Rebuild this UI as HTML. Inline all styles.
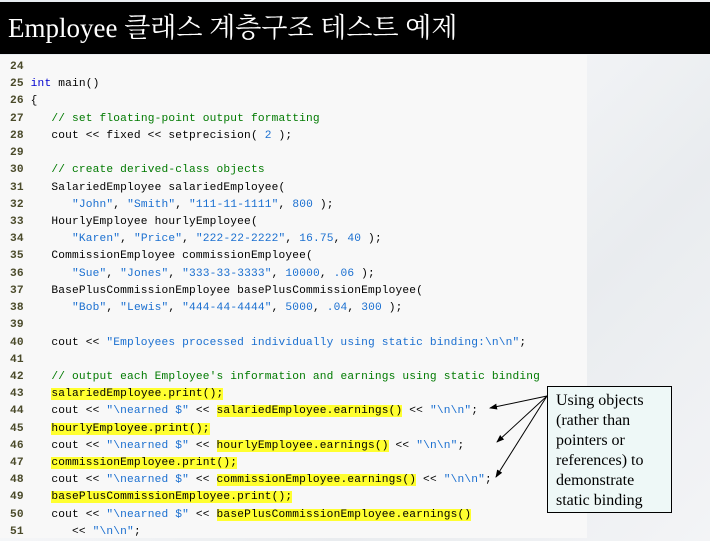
<!DOCTYPE html>
<html><head><meta charset="utf-8"><style>
*{margin:0;padding:0}
body{width:710px;height:541px;overflow:hidden;position:relative;background:linear-gradient(135deg,#e6ebf0 0%,#f6f7f9 40%,#e9ecef 70%,#f3f4f6 100%);font-family:"Liberation Sans",sans-serif}
#title{position:absolute;left:0;top:2px;width:710px;height:52px;background:#000;color:#fff;font:27px "Liberation Serif","Noto Serif CJK SC",serif;line-height:52px;padding-left:8px;box-sizing:border-box}
#code{position:absolute;left:0;top:55px;width:587px;height:483px;background:#f8f8f8}
pre{position:absolute;left:10px;top:59px;font:11.2px "Liberation Mono",monospace;letter-spacing:0.17px;line-height:17.22px;color:#000}
.n{color:#4a4a2a;font-weight:bold}
.k{color:#0000d0}.c{color:#007a00}.s{color:#1a6fd0}
.h{background:#ffff30}
#box{position:absolute;left:547px;top:386px;width:125px;height:127px;border:1.5px solid #000;background:#eef8f7;font:16px "Liberation Serif",serif;line-height:20px;padding:4px 0 0 8px;box-sizing:border-box;color:#000}
svg{position:absolute;left:0;top:0}
</style></head><body>
<div id="title">Employee 클래스 계층구조 테스트 예제</div>
<div id="code"></div>
<pre><span class="n">24</span>
<span class="n">25</span> <span class="k">int</span> main()
<span class="n">26</span> {
<span class="n">27</span>    <span class="c">// set floating-point output formatting</span>
<span class="n">28</span>    cout &lt;&lt; fixed &lt;&lt; setprecision( <span class="s">2</span> );
<span class="n">29</span>
<span class="n">30</span>    <span class="c">// create derived-class objects</span>
<span class="n">31</span>    SalariedEmployee salariedEmployee(
<span class="n">32</span>       <span class="s">"John"</span>, <span class="s">"Smith"</span>, <span class="s">"111-11-1111"</span>, <span class="s">800</span> );
<span class="n">33</span>    HourlyEmployee hourlyEmployee(
<span class="n">34</span>       <span class="s">"Karen"</span>, <span class="s">"Price"</span>, <span class="s">"222-22-2222"</span>, <span class="s">16.75</span>, <span class="s">40</span> );
<span class="n">35</span>    CommissionEmployee commissionEmployee(
<span class="n">36</span>       <span class="s">"Sue"</span>, <span class="s">"Jones"</span>, <span class="s">"333-33-3333"</span>, <span class="s">10000</span>, <span class="s">.06</span> );
<span class="n">37</span>    BasePlusCommissionEmployee basePlusCommissionEmployee(
<span class="n">38</span>       <span class="s">"Bob"</span>, <span class="s">"Lewis"</span>, <span class="s">"444-44-4444"</span>, <span class="s">5000</span>, <span class="s">.04</span>, <span class="s">300</span> );
<span class="n">39</span>
<span class="n">40</span>    cout &lt;&lt; <span class="s">"Employees processed individually using static binding:\n\n"</span>;
<span class="n">41</span>
<span class="n">42</span>    <span class="c">// output each Employee's information and earnings using static binding</span>
<span class="n">43</span>    <span class="h">salariedEmployee.print();</span>
<span class="n">44</span>    cout &lt;&lt; <span class="s">"\nearned $"</span> &lt;&lt; <span class="h">salariedEmployee.earnings()</span> &lt;&lt; <span class="s">"\n\n"</span>;
<span class="n">45</span>    <span class="h">hourlyEmployee.print();</span>
<span class="n">46</span>    cout &lt;&lt; <span class="s">"\nearned $"</span> &lt;&lt; <span class="h">hourlyEmployee.earnings()</span> &lt;&lt; <span class="s">"\n\n"</span>;
<span class="n">47</span>    <span class="h">commissionEmployee.print();</span>
<span class="n">48</span>    cout &lt;&lt; <span class="s">"\nearned $"</span> &lt;&lt; <span class="h">commissionEmployee.earnings()</span> &lt;&lt; <span class="s">"\n\n"</span>;
<span class="n">49</span>    <span class="h">basePlusCommissionEmployee.print();</span>
<span class="n">50</span>    cout &lt;&lt; <span class="s">"\nearned $"</span> &lt;&lt; <span class="h">basePlusCommissionEmployee.earnings()</span>
<span class="n">51</span>       &lt;&lt; <span class="s">"\n\n"</span>;</pre>
<div id="box">Using objects<br>(rather than<br>pointers or<br>references) to<br>demonstrate<br>static binding</div>
<svg width="710" height="541"><defs><marker id="a" markerWidth="8" markerHeight="6" refX="7" refY="3" orient="auto"><path d="M0,0 L8,3 L0,6 Z" fill="#000"/></marker></defs>
<g stroke="#000" stroke-width="1" fill="none" marker-end="url(#a)">
<line x1="547" y1="396" x2="490" y2="408"/>
<line x1="547" y1="396" x2="497" y2="442"/>
<line x1="547" y1="396" x2="496" y2="477"/>
</g></svg>
</body></html>
